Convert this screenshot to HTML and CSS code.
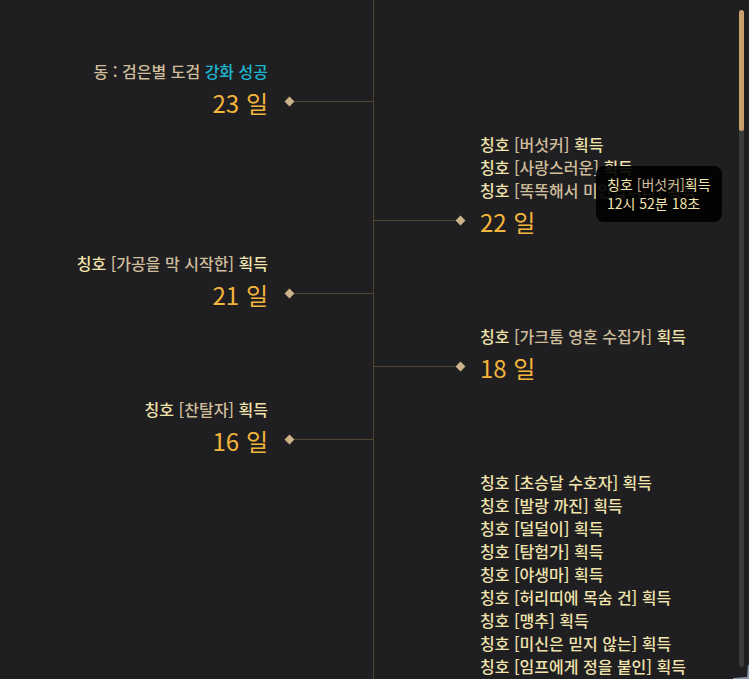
FILE: index.html
```html
<!DOCTYPE html>
<html lang="ko">
<head>
<meta charset="utf-8">
<title>Timeline</title>
<link rel="stylesheet" href="styles.css">
</head>
<body>
<div class="app">
  <div class="timeline">
    <div class="entry left">
      <div class="line"><span class="tan">동 : 검은별 도검</span> <span class="cyan">강화 성공</span></div>
      <div class="day"><span class="num">23 일</span><span class="conn"><i class="dot"></i><i class="rule"></i></span></div>
    </div>
    <div class="entry right">
      <div class="line">칭호 <span class="tan">[버섯커]</span> 획득</div>
      <div class="line">칭호 <span class="tan">[사랑스러운]</span> 획득</div>
      <div class="line">칭호 <span class="tan">[똑똑해서 미안합니다]</span> 획득</div>
      <div class="day"><span class="conn"><i class="rule"></i><i class="dot"></i></span><span class="num">22 일</span></div>
    </div>
    <div class="entry left">
      <div class="line">칭호 <span class="tan">[가공을 막 시작한]</span> 획득</div>
      <div class="day"><span class="num">21 일</span><span class="conn"><i class="dot"></i><i class="rule"></i></span></div>
    </div>
    <div class="entry right">
      <div class="line">칭호 <span class="tan">[가크툼 영혼 수집가]</span> 획득</div>
      <div class="day"><span class="conn"><i class="rule"></i><i class="dot"></i></span><span class="num">18 일</span></div>
    </div>
    <div class="entry left">
      <div class="line">칭호 <span class="tan">[찬탈자]</span> 획득</div>
      <div class="day"><span class="num">16 일</span><span class="conn"><i class="dot"></i><i class="rule"></i></span></div>
    </div>
    <div class="entry right">
      <div class="line">칭호 [초승달 수호자] 획득</div>
      <div class="line">칭호 [발랑 까진] 획득</div>
      <div class="line">칭호 [덜덜이] 획득</div>
      <div class="line">칭호 [탐험가] 획득</div>
      <div class="line">칭호 [야생마] 획득</div>
      <div class="line">칭호 [허리띠에 목숨 건] 획득</div>
      <div class="line">칭호 [맹추] 획득</div>
      <div class="line">칭호 [미신은 믿지 않는] 획득</div>
      <div class="line">칭호 [임프에게 정을 붙인] 획득</div>
    </div>
  </div>
  <div class="scroll">
    <div class="track"><div class="thumb"></div></div>
  </div>
  <div class="tooltip">
    <div>칭호 <span class="tan">[버섯커]</span>획득</div>
    <div>12시 52분 18초</div>
  </div>
  <svg class="grip" width="16" height="14" viewBox="0 0 16 14"><polygon points="0,13 14,12 15,0 16,0 16,14 0,14" fill="#8793b0"/></svg>
</div>
</body>
</html>
```

FILE: styles.css
```css
* { box-sizing: border-box; }
html, body { margin: 0; padding: 0; background: #1f1f21; }
body {
  font-family: "Noto Sans CJK KR", "Noto Sans", sans-serif;
  color: #f1e3ac;
  font-size: 16px;
  font-weight: 500;
}
.app {
  position: relative;
  width: 749px;
  height: 679px;
  overflow: hidden;
  display: flex;
  background: #1f1f21;
}
.timeline {
  flex: 1;
  min-width: 0;
  padding-top: 60px;
  display: flex;
  flex-direction: column;
  gap: 10px;
  background: linear-gradient(#4f4430, #4f4430) no-repeat 373px 0 / 1px 100%;
}
.line {
  line-height: 23px;
  white-space: nowrap;
}
.tan { color: #cfbd9b; }
.cyan { color: #1cb6cf; }
.day {
  display: flex;
  align-items: center;
  height: 40px;
}
.num {
  color: #f2b43a;
  font-size: 24px;
  font-weight: 400;
  line-height: 40px;
}
.conn {
  display: flex;
  align-items: center;
  align-self: center;
  margin-top: -3px;
}
.dot {
  width: 7px;
  height: 7px;
  margin: 0 1.5px;
  background: #cdb38a;
  transform: rotate(45deg);
  flex: none;
}
.rule {
  flex: 1;
  height: 1px;
  background: #54472f;
}
.entry.left {
  width: 374px;
  text-align: right;
}
.entry.left .line { padding-right: 106px; }
.entry.left .day { justify-content: flex-end; }
.entry.left .conn {
  width: 106px;
  padding-left: 16px;
}
.entry.right { padding-left: 373px; }
.entry.right .line { padding-left: 107px; }
.entry.right .conn {
  width: 107px;
  padding-right: 15px;
}
.scroll {
  width: 14px;
  flex: none;
  padding: 10px 5px 12px 4px;
}
.track {
  height: 100%;
  width: 5px;
  border-radius: 3px;
  background: #3b3b3d;
}
.thumb {
  height: 121px;
  border-radius: 3px;
  background: #c9a06c;
}
.tooltip {
  position: absolute;
  left: 596px;
  top: 166px;
  width: 126px;
  height: 56px;
  padding: 9px 0 0 11px;
  border-radius: 8px;
  background: rgba(0, 0, 0, 0.9);
  font-size: 14px;
  font-weight: 400;
  line-height: 19px;
  color: #f1e3ac;
  white-space: nowrap;
}
.grip {
  position: absolute;
  right: 0;
  bottom: 0;
}
```
